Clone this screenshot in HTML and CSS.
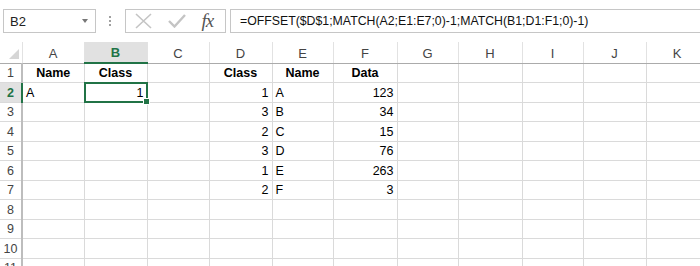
FILE: index.html
```html
<!DOCTYPE html>
<html lang="en">
  <head>
    <meta charset="UTF-8" />
    <meta name="viewport" content="width=device-width, initial-scale=1.0" />
    <link rel="stylesheet" href="styles.css">
    <title>Book1</title>
  </head>
  <body>
    <div class="toolbar">
      <div class="namebox">
        <span>B2</span>
        <span class="arrow"></span>
      </div>
      <div class="grip"><i></i><i></i><i></i></div>
      <div class="fx-box">
        <svg class="icon" width="18" height="16" viewBox="0 0 18 16">
          <path d="M1 1 L16 15 M16 1 L1 15" stroke="#c4c4c4" stroke-width="1.6" fill="none" />
        </svg>
        <svg class="icon" width="18" height="14" viewBox="0 0 18 14">
          <path d="M1 7 L6.5 12.5 L17 1" stroke="#c4c4c4" stroke-width="2.4" fill="none" />
        </svg>
        <span class="fx">fx</span>
      </div>
      <div class="formula">=OFFSET($D$1;MATCH(A2;E1:E7;0)-1;MATCH(B1;D1:F1;0)-1)</div>
    </div>

    <table class="sheet">
      <colgroup>
        <col style="width:22px"><col style="width:62px"><col style="width:63px"><col style="width:62px">
        <col style="width:63px"><col style="width:61px"><col style="width:64px"><col style="width:61px">
        <col style="width:64px"><col style="width:61px"><col style="width:63px"><col style="width:62px">
      </colgroup>
      <tr class="col-head">
        <th class="corner"><span class="tri"></span></th>
        <th>A</th><th class="sel">B</th><th>C</th><th>D</th><th>E</th><th>F</th>
        <th>G</th><th>H</th><th>I</th><th>J</th><th>K</th>
      </tr>
      <tr>
        <th class="rh">1</th>
        <td class="hd">Name</td><td class="hd">Class</td><td></td><td class="hd">Class</td><td class="hd">Name</td><td class="hd">Data</td>
        <td></td><td></td><td></td><td></td><td></td>
      </tr>
      <tr>
        <th class="rh sel">2</th>
        <td>A</td><td class="num active">1</td><td></td><td class="num">1</td><td>A</td><td class="num">123</td>
        <td></td><td></td><td></td><td></td><td></td>
      </tr>
      <tr>
        <th class="rh">3</th>
        <td></td><td></td><td></td><td class="num">3</td><td>B</td><td class="num">34</td>
        <td></td><td></td><td></td><td></td><td></td>
      </tr>
      <tr>
        <th class="rh">4</th>
        <td></td><td></td><td></td><td class="num">2</td><td>C</td><td class="num">15</td>
        <td></td><td></td><td></td><td></td><td></td>
      </tr>
      <tr>
        <th class="rh">5</th>
        <td></td><td></td><td></td><td class="num">3</td><td>D</td><td class="num">76</td>
        <td></td><td></td><td></td><td></td><td></td>
      </tr>
      <tr>
        <th class="rh">6</th>
        <td></td><td></td><td></td><td class="num">1</td><td>E</td><td class="num">263</td>
        <td></td><td></td><td></td><td></td><td></td>
      </tr>
      <tr>
        <th class="rh">7</th>
        <td></td><td></td><td></td><td class="num">2</td><td>F</td><td class="num">3</td>
        <td></td><td></td><td></td><td></td><td></td>
      </tr>
      <tr>
        <th class="rh">8</th>
        <td></td><td></td><td></td><td></td><td></td><td></td>
        <td></td><td></td><td></td><td></td><td></td>
      </tr>
      <tr>
        <th class="rh">9</th>
        <td></td><td></td><td></td><td></td><td></td><td></td>
        <td></td><td></td><td></td><td></td><td></td>
      </tr>
      <tr>
        <th class="rh">10</th>
        <td></td><td></td><td></td><td></td><td></td><td></td>
        <td></td><td></td><td></td><td></td><td></td>
      </tr>
      <tr>
        <th class="rh">11</th>
        <td></td><td></td><td></td><td></td><td></td><td></td>
        <td></td><td></td><td></td><td></td><td></td>
      </tr>
    </table>
  </body>
</html>
```

FILE: styles.css
```css
body {
  margin: 0;
  background-color: #fff;
  font-family: "Liberation Sans", Arial, sans-serif;
  color: #000;
  overflow: hidden;
  width: 700px;
  height: 266px;
}
.toolbar {
  display: flex;
  align-items: stretch;
  height: 24px;
  padding: 9px 0 0 3px;
  margin-bottom: 9px;
}
.namebox {
  box-sizing: border-box;
  width: 98px;
  border: 1px solid #c6c6c6;
  display: flex;
  align-items: center;
  justify-content: space-between;
  padding: 0 7px 0 6px;
  font-size: 13px;
  color: #222;
}
.arrow {
  width: 0;
  height: 0;
  border-left: 3.5px solid transparent;
  border-right: 3.5px solid transparent;
  border-top: 4px solid #777;
}
.grip {
  width: 30px;
  display: flex;
  flex-direction: column;
  align-items: center;
  justify-content: center;
  gap: 2px;
}
.grip i {
  width: 2px;
  height: 2px;
  background-color: #a0a0a0;
}
.fx-box {
  box-sizing: border-box;
  width: 107px;
  border: 1px solid #c6c6c6;
  display: flex;
  align-items: center;
  padding: 0 0 0 9px;
}
.fx-box .icon:nth-child(2) {
  margin-left: 15px;
}
.fx {
  margin-left: 16px;
  font-family: "Liberation Serif", "Times New Roman", serif;
  font-style: italic;
  font-size: 19px;
  color: #555;
  letter-spacing: -1px;
}
.formula {
  box-sizing: border-box;
  flex: 0 0 470px;
  margin-left: 4px;
  border: 1px solid #c6c6c6;
  border-right: none;
  padding: 0 0 0 9px;
  font-size: 12.3px;
  line-height: 22px;
  color: #111;
  white-space: nowrap;
}

/* grid */
.sheet {
  border-collapse: collapse;
  table-layout: fixed;
  width: 708px;
  font-size: 12.5px;
}
.sheet tr {
  height: 20px;
}
.sheet tr:nth-child(even) {
  height: 19px;
}
.sheet tr.col-head {
  height: 21px;
}
.sheet td,
.sheet th {
  padding: 0 3px 1px;
  border: 1px solid #dadada;
  white-space: nowrap;
  overflow: visible;
  vertical-align: bottom;
  line-height: 16px;
}
.col-head th {
  font-weight: normal;
  font-size: 13px;
  color: #444;
  padding-bottom: 1px;
  border-top: none;
  border-bottom: 1px solid #ababab;
  border-left-color: #e2e2e2;
  border-right-color: #e2e2e2;
}
.col-head th.sel {
  background-color: #e1e1e1;
  color: #217346;
  font-weight: bold;
  border-bottom: 2px solid #217346;
}
.corner {
  position: relative;
  border-left: none !important;
}
.tri {
  position: absolute;
  right: 3px;
  bottom: 4px;
  width: 0;
  height: 0;
  border-left: 10px solid transparent;
  border-bottom: 10px solid #d6d6d6;
}
.rh {
  font-weight: normal;
  color: #444;
  text-align: center;
  padding: 0 0 1px;
  border-left: none !important;
  border-right: 2px solid #bdbdbd !important;
  font-size: 12.5px;
}
.rh.sel {
  background-color: #e1e1e1;
  color: #217346;
  font-weight: bold;
  border-right-color: #217346 !important;
}
.hd {
  font-weight: bold;
  text-align: center;
}
.num {
  text-align: right;
}
.active {
  position: relative;
}
.active::after {
  content: "";
  position: absolute;
  left: -1px;
  top: -1px;
  right: -1px;
  bottom: -1px;
  border: 2px solid #217346;
}
.active::before {
  content: "";
  position: absolute;
  right: -3px;
  bottom: -3px;
  width: 5px;
  height: 5px;
  background-color: #217346;
  border: 1px solid #fff;
  z-index: 1;
}
```
